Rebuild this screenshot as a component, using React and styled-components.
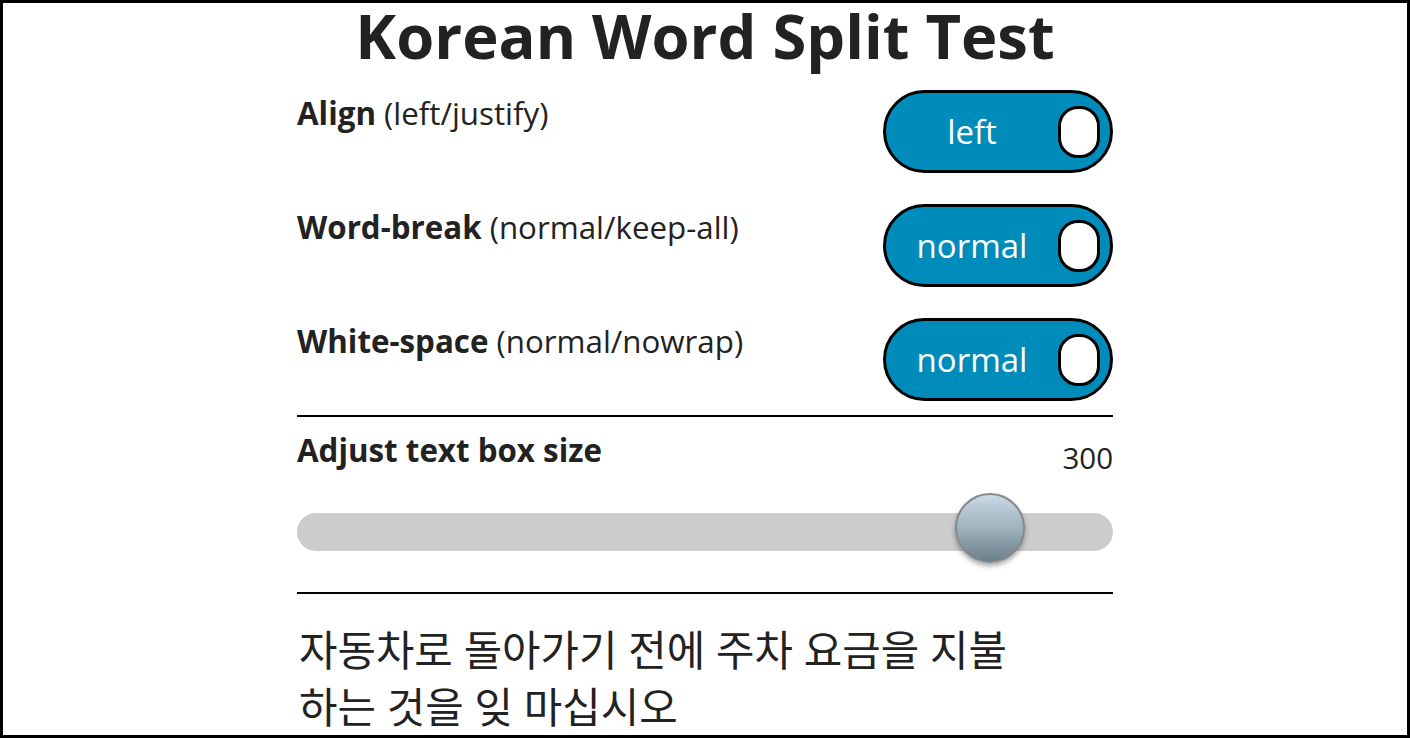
import React, { useState } from "react";
import styled, { createGlobalStyle } from "styled-components";

const GlobalStyle = createGlobalStyle`
  html, body { margin: 0; padding: 0; background: #fff; }
  body { font-family: "Open Sans", "Noto Sans CJK KR", sans-serif; color: #222; }
  * { box-sizing: border-box; }
`;

const Frame = styled.div`
  width: 1410px;
  height: 738px;
  border: 3px solid #000;
  overflow: hidden;
`;

const Column = styled.main`
  width: 816px;
  margin: 0 auto;
  display: flex;
  flex-direction: column;
`;

const Title = styled.h1`
  margin: 0;
  font-size: 61.5px;
  line-height: 64px;
  font-weight: 700;
  text-align: center;
  white-space: nowrap;
`;

const Options = styled.section`
  display: flex;
  flex-direction: column;
  gap: 31px;
  margin-top: 23px;
`;

const Row = styled.div`
  display: flex;
  justify-content: space-between;
  align-items: flex-start;
`;

const Label = styled.div`
  font-size: 31.3px;
  line-height: 42px;
  margin-top: ${(p) => (p.$flush ? 0 : 2)}px;
  b { font-weight: 700; }
`;

const Toggle = styled.button`
  width: 230px;
  height: 83px;
  border: 3px solid #000;
  border-radius: 42px;
  background: #008cba;
  display: flex;
  align-items: center;
  padding: 0 10px 0 0;
  cursor: pointer;
  font-family: "Open Sans", sans-serif;
`;

const ToggleText = styled.span`
  flex: 1;
  text-align: center;
  color: #fff;
  font-size: 33px;
  line-height: 44px;
`;

const Knob = styled.span`
  width: 42px;
  height: 52px;
  border: 3px solid #000;
  border-radius: 20px;
  background: #fff;
  flex: none;
`;

const Rule = styled.hr`
  width: 100%;
  margin: ${(p) => p.$top}px 0 0;
  border: 0;
  height: 2px;
  background: #000;
`;

const SliderHeader = styled.div`
  display: flex;
  justify-content: space-between;
  align-items: flex-start;
  margin-top: 12px;
`;

const Value = styled.span`
  font-size: 29.5px;
  line-height: 40px;
  margin-top: 9px;
`;

const Track = styled.div`
  position: relative;
  height: 38px;
  border-radius: 19px;
  background: #cccccc;
  margin-top: 35px;
`;

const Thumb = styled.div`
  position: absolute;
  top: -20px;
  width: 70px;
  height: 70px;
  border-radius: 50%;
  border: 2px solid #85898c;
  background: linear-gradient(to bottom, #c9d9e5 0%, #9fb2be 50%, #6c808c 100%);
  box-shadow: 0 3px 5px rgba(0, 0, 0, 0.35);
`;

const KoreanText = styled.p`
  margin: 27px 0 0 2px;
  width: ${(p) => p.$w}px;
  font-family: "Open Sans", "Noto Sans CJK KR", sans-serif;
  font-size: 41.8px;
  line-height: 57px;
  word-break: normal;
  text-align: left;
`;

const options = [
  { bold: "Align", rest: "(left/justify)", value: "left" },
  { bold: "Word-break", rest: "(normal/keep-all)", value: "normal" },
  { bold: "White-space", rest: "(normal/nowrap)", value: "normal" },
];

export default function App() {
  const [value] = useState(300);
  const min = 0;
  const max = 340;
  const frac = (value - min) / (max - min);
  return (
    <Frame>
      <GlobalStyle />
      <Column>
        <Title>Korean Word Split Test</Title>
        <Options>
          {options.map((o) => (
            <Row key={o.bold}>
              <Label>
                <b>{o.bold}</b> {o.rest}
              </Label>
              <Toggle>
                <ToggleText>{o.value}</ToggleText>
                <Knob />
              </Toggle>
            </Row>
          ))}
        </Options>
        <Rule $top={14} />
        <SliderHeader>
          <Label $flush>
            <b>Adjust text box size</b>
          </Label>
          <Value>{value}</Value>
        </SliderHeader>
        <Track>
          <Thumb style={{ left: `calc(${frac} * (100% - 70px))` }} />
        </Track>
        <Rule $top={41} />
        <KoreanText $w={722}>
          자동차로 돌아가기 전에 주차 요금을 지불하는 것을 잊 마십시오
        </KoreanText>
      </Column>
    </Frame>
  );
}
